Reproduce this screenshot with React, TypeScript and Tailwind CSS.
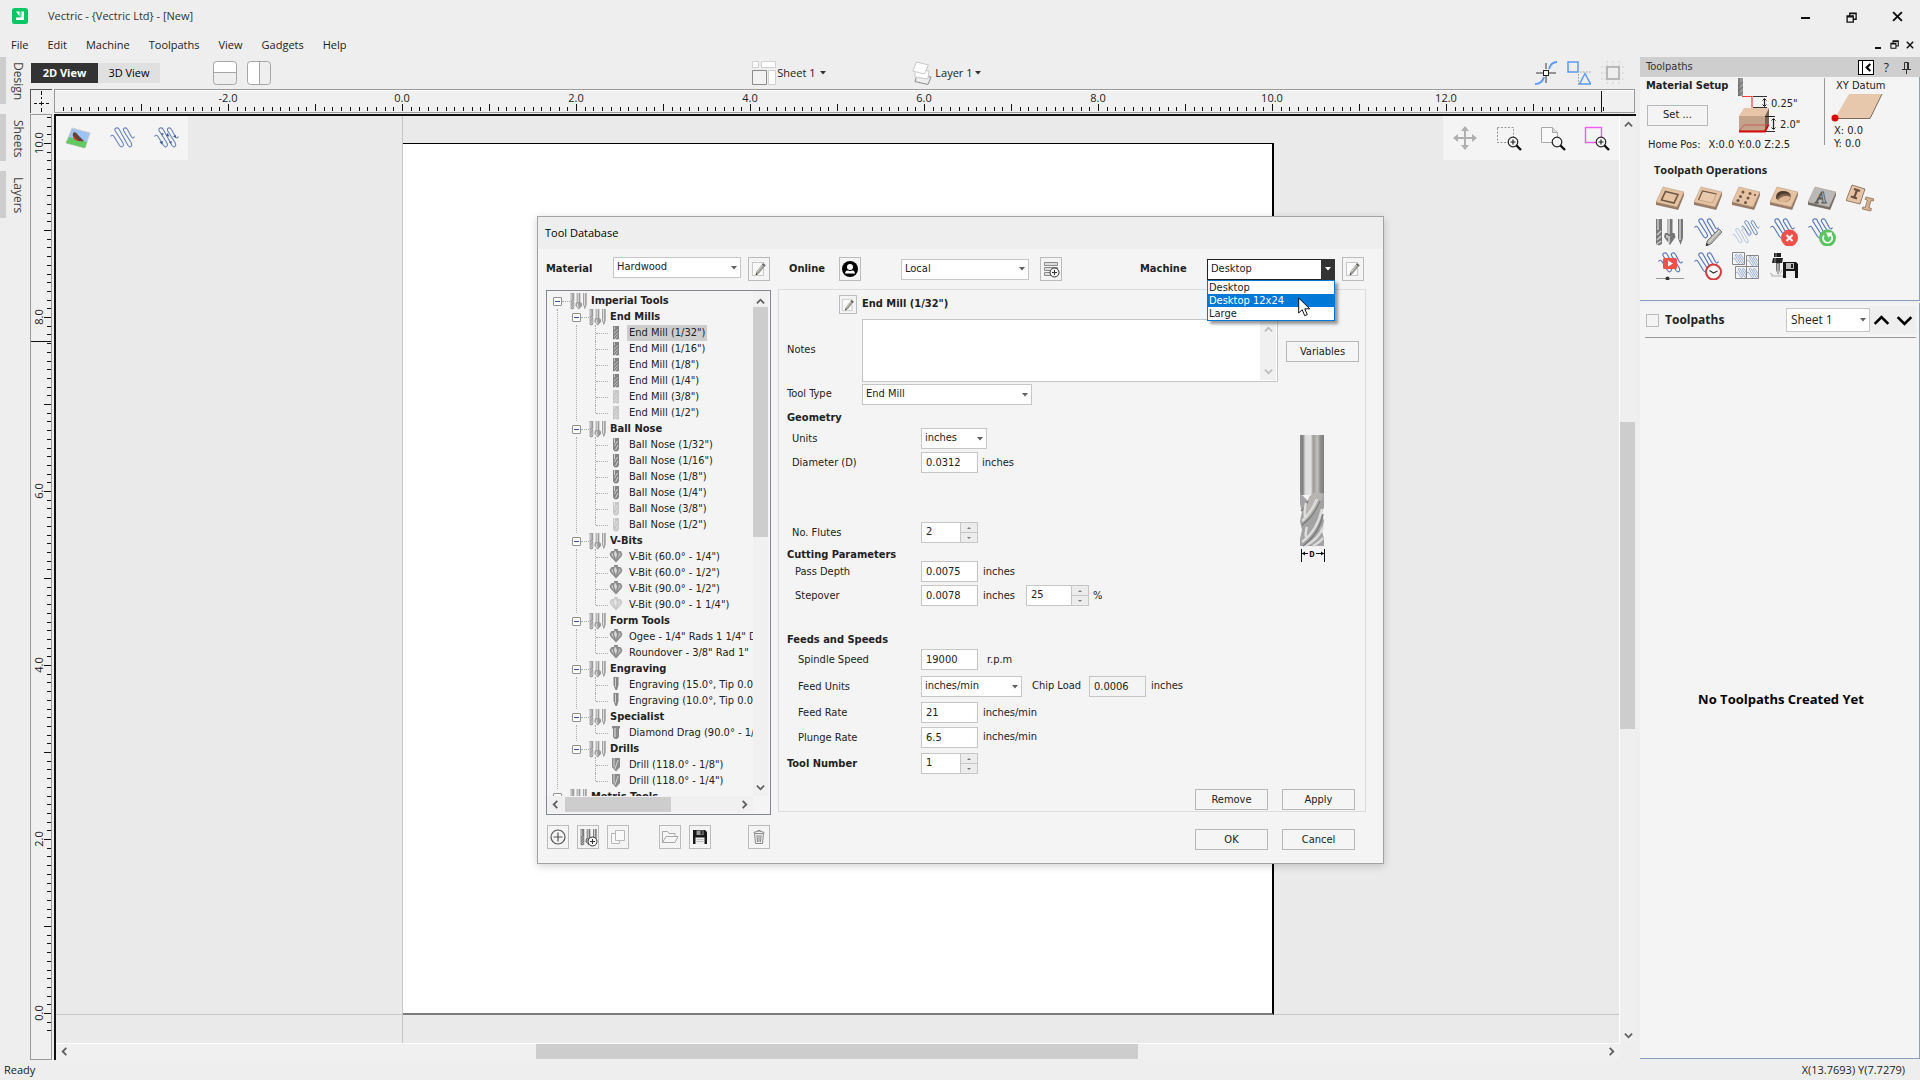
import React, { type ReactNode } from 'react';

const UI = "font-['Open_Sans','Noto_Sans',sans-serif]";
const DLG = "font-['DejaVu_Sans_Condensed','DejaVu_Sans',sans-serif]";

const SQUIGGLE =
  'M.5 9.5Q2 7 4 9.5L9.500 18.500Q11.500 21 13 19Q14 17.500 12.700 15.500L5 3.500Q4.500 1.500 6 1Q8 .5 9 2L18 18.500Q20 21 21.500 19Q22 17.500 21 15.500L13.500 3.500Q13 1.500 14.500 1Q16.500 .5 17.500 2.500L21.500 10Q23 12 24.500 9.500';

/* ---------- small drawings ---------- */

function Chevron({ dir, size = 9, color = '#606060', weight = 2 }: { dir: 'up' | 'down' | 'left' | 'right'; size?: number; color?: string; weight?: number }) {
  const d = { up: 'M1 7l4-4 4 4', down: 'M1 3l4 4 4-4', left: 'M7 1L3 5l4 4', right: 'M3 1l4 4-4 4' }[dir];
  return (
    <svg width={size} height={size} viewBox="0 0 10 10" fill="none" stroke={color} strokeWidth={weight}>
      <path d={d} />
    </svg>
  );
}

function Caret({ color = '#606060' }: { color?: string }) {
  return (
    <svg width="6" height="4" viewBox="0 0 6 4" fill={color}>
      <path d="M0 0h6L3 3.5z" />
    </svg>
  );
}

function RestoreIcon({ size }: { size: number }) {
  return (
    <svg width={size} height={size} viewBox="0 0 10 10" fill="none" stroke="#111" strokeWidth="1.2">
      <path d="M1 3.6h5.6v5.6H1zM1 4.4h5.6M3.4 3.4V1h5.8v5.6H7M3.4 1.5h5.8" />
    </svg>
  );
}

function CloseIcon({ size }: { size: number }) {
  return (
    <svg width={size} height={size} viewBox="0 0 10 10" fill="none" stroke="#111" strokeWidth="1.8">
      <path d="M1 1l8 8M9 1L1 9" />
    </svg>
  );
}

function EditIcon({ size = 16 }: { size?: number }) {
  return (
    <svg width={size} height={size} viewBox="0 0 16 16">
      <rect x="1.5" y="1.5" width="11" height="13" fill="#fafafa" stroke="#c8c8c8" />
      <path d="M12 2.2l2.6 2L8 12.6l-3.3 1.6.8-3.6z" fill="#96968e" />
      <path d="M12.2 3.6L6.4 11" stroke="#dcdcd0" strokeWidth=".9" />
      <path d="M4.7 14.2l.5-2 1.4 1.1z" fill="#222" />
      <path d="M12 2.2l2.6 2-1.1 1.4-2.6-2z" fill="#666" />
    </svg>
  );
}

function ToolsIcon({ size = 16, strong = false }: { size?: number; strong?: boolean }) {
  const a = strong ? '#777' : '#9a9a9a';
  const b = strong ? '#d0d0d0' : '#dedede';
  return (
    <svg width={size} height={size} viewBox="0 0 28 28">
      <path d="M1 0h6v25l-3 2-3-1z" fill={a} />
      <path d="M3 1v11M2 17l4-4M2 22l4-4M3 25l3-3" stroke={b} strokeWidth="1.500" />
      <path d="M11 0h6v15q4 2 3 6l-5.500 6L9 21q-1-3 2-6z" fill={a} />
      <path d="M13.500 0v15M13 17q-2 3 1 7" stroke={b} strokeWidth="2" fill="none" />
      <path d="M21.500 0h6v19l-3 8-3-8z" fill={a} />
      <path d="M24 0v21" stroke={b} strokeWidth="2" />
    </svg>
  );
}

type BitKind = 'end' | 'ball' | 'vbit' | 'engrave' | 'drag' | 'drill';

function BitIcon({ kind, faded }: { kind: BitKind; faded?: boolean }) {
  return (
    <svg width="14" height="16" viewBox="0 0 14 16" opacity={faded ? 0.4 : 1}>
      {kind === 'end' && (
        <g>
          <path d="M4 1h6v13l-2 .5L6 14l-2 .5z" fill="#828282" />
          <path d="M5.500 1.500v3M5 8.500l3.500-4M5 12l4-4.500M6 14l3-3.500" stroke="#c4c4c4" />
        </g>
      )}
      {kind === 'ball' && (
        <g>
          <path d="M4 1h6v10.500Q9.500 14.500 7 14.500T4 11.500z" fill="#848484" />
          <path d="M5.500 1v5M5.500 9l3-5M6.500 13l2.500-5" stroke="#d2d2d2" />
        </g>
      )}
      {kind === 'vbit' && (
        <g>
          <path d="M5 0h4v2h2.500L13.500 5 12.500 7.500 7 13.500 1.500 7.500.5 5 2.500 2H5z" fill="#8c8c8c" />
          <path d="M3 3.500L2.500 6 5 9zM6 1.500L5 5l2 5 1-5z" fill="#dadada" />
          <path d="M10 3l2 2.500L8.500 10z" fill="#b4b4b4" />
        </g>
      )}
      {kind === 'engrave' && (
        <g>
          <path d="M4.500 0h5v8L8 13H6.500L4.500 8z" fill="#858585" />
          <path d="M6.500 1v9" stroke="#cfcfcf" />
        </g>
      )}
      {kind === 'drag' && (
        <g>
          <path d="M3 1h8v2l-1 1v8l-2 2H6l-2-2V4L3 3z" fill="#8a8a8a" />
          <path d="M6 3v9" stroke="#d8d8d8" strokeWidth="1.200" />
        </g>
      )}
      {kind === 'drill' && (
        <g>
          <path d="M3 1h8v9l-4 4.500L3 10z" fill="#8a8a8a" />
          <path d="M5 1v9M6 12l3-9" stroke="#d4d4d4" />
        </g>
      )}
    </svg>
  );
}

/* ---------- form controls ---------- */

function Combo({ id, options, className, label }: { id: string; options: string[]; className: string; label?: string }) {
  return (
    <div className={`relative h-[21px] ${className}`}>
      <select id={id} aria-label={label} className="block h-full w-full appearance-none border border-[#c6c6c6] bg-white pl-[3px] text-[11px] text-[#222]">
        {options.map((o) => (
          <option key={o}>{o}</option>
        ))}
      </select>
      <span className="pointer-events-none absolute inset-y-0 right-[4px] flex items-center">
        <Caret />
      </span>
    </div>
  );
}

function Field({ id, value, readOnly, className = 'w-[57px]', label }: { id: string; value: string; readOnly?: boolean; className?: string; label?: string }) {
  return (
    <input
      id={id}
      aria-label={label}
      defaultValue={value}
      readOnly={readOnly}
      className={`h-[21px] shrink-0 border border-[#c6c6c6] pl-1 text-[11px] text-[#222] ${readOnly ? 'bg-[#f4f4f4]' : 'bg-white'} ${className}`}
    />
  );
}

function Spinner({ id, value, className = 'w-[57px]', label }: { id: string; value: string; className?: string; label?: string }) {
  return (
    <div className={`flex h-[21px] shrink-0 border border-[#c6c6c6] bg-white ${className}`}>
      <input id={id} aria-label={label} defaultValue={value} className="min-w-0 flex-1 bg-transparent pl-1 text-[11px] text-[#222]" />
      <div className="flex w-[17px] flex-col border-l border-[#c6c6c6] bg-[#ececec]">
        <button aria-label="Increase" className="flex flex-1 items-center justify-center border-b border-[#c6c6c6]">
          <svg width="4" height="2" viewBox="0 0 4 2" fill="#777"><path d="M0 2h4L2 0z" /></svg>
        </button>
        <button aria-label="Decrease" className="flex flex-1 items-center justify-center">
          <svg width="4" height="2" viewBox="0 0 4 2" fill="#777"><path d="M0 0h4L2 2z" /></svg>
        </button>
      </div>
    </div>
  );
}

function IconButton({ label, children }: { label: string; children: ReactNode }) {
  return (
    <button aria-label={label} className="flex h-6 w-[22px] shrink-0 items-center justify-center border border-[#bcbcbc] bg-[#f4f4f4]">
      {children}
    </button>
  );
}

function PushButton({ children }: { children: ReactNode }) {
  return <button className="h-[21px] w-[73px] border border-[#b8b8b8] bg-[#f5f5f5] pt-px text-[11px] text-[#222]">{children}</button>;
}

function Row({ label, htmlFor, pad, className = '', children }: { label: string; htmlFor: string; pad: string; className?: string; children: ReactNode }) {
  return (
    <div className={`flex h-[21px] items-center ${className}`}>
      <label htmlFor={htmlFor} className={`w-[134px] shrink-0 pt-[2px] ${pad}`}>{label}</label>
      {children}
    </div>
  );
}

function Unit({ className = 'pl-[5px]', children }: { className?: string; children: ReactNode }) {
  return <span className={`pt-[2px] ${className}`}>{children}</span>;
}

/* ---------- window chrome ---------- */

function TitleBar() {
  return (
    <header className="flex h-8 shrink-0 items-center pl-3">
      <svg width="16" height="16" viewBox="0 0 16 16">
        <rect width="16" height="16" rx="2.500" fill="#08c764" />
        <path d="M4 3.500h3.500v4.500h1V3.500H12V12H4V9h4" fill="#fff" />
        <path d="M9 3.500V9H4" fill="none" stroke="#08c764" strokeWidth=".9" />
      </svg>
      <h1 className="ml-5 flex-1 text-[11px] text-[#333]">Vectric - &#123;Vectric Ltd&#125; - [New]</h1>
      <button aria-label="Minimize" className="flex w-[46px] justify-center pt-1"><span className="h-[2px] w-[9px] bg-[#111]" /></button>
      <button aria-label="Restore" className="flex w-[46px] justify-center pt-[2px]"><RestoreIcon size={11} /></button>
      <button aria-label="Close" className="flex w-[46px] justify-center"><CloseIcon size={11} /></button>
    </header>
  );
}

function MenuBar() {
  return (
    <nav className="flex h-[25px] shrink-0 items-center pr-[2px] pl-[11px]">
      <div className="flex flex-1 gap-[19px] pt-px text-[11px] text-[#222]">
        {['File', 'Edit', 'Machine', 'Toolpaths', 'View', 'Gadgets', 'Help'].map((m) => (
          <button key={m}>{m}</button>
        ))}
      </div>
      <button aria-label="Minimize document" className="flex h-2 w-4 items-end justify-center"><span className="h-[2px] w-[6px] bg-[#111]" /></button>
      <button aria-label="Restore document" className="flex w-4 justify-center"><RestoreIcon size={9} /></button>
      <button aria-label="Close document" className="flex w-4 justify-center"><CloseIcon size={8} /></button>
    </nav>
  );
}

function SideTabs() {
  return (
    <div className="flex w-[30px] shrink-0 flex-col gap-[10px]">
      {['Design', 'Sheets', 'Layers'].map((t) => (
        <button key={t} className="flex h-[47px] items-center gap-1">
          <span className="h-full w-[6px] bg-[#cdcdcd]" />
          <span className="pt-[2px] text-[12px] leading-[16px] text-[#444] [writing-mode:vertical-rl]">{t}</span>
        </button>
      ))}
    </div>
  );
}

function ViewToolbar() {
  return (
    <div className="flex h-8 shrink-0 items-center pr-[15px] pl-px">
      <div className="flex basis-[45%] items-center text-[11px]">
        <button className="h-5 w-[67px] bg-[#333] font-bold text-white">2D View</button>
        <button className="h-5 w-[62px] bg-[#e0e0e0] text-black">3D View</button>
        <button aria-label="Split horizontally" className="ml-[53px]">
          <svg width="24" height="24" viewBox="0 0 24 24" fill="none" stroke="#a6a6a6">
            <path d="M1 11V4q0-3 3-3h16q3 0 3 3v7z" fill="#fff" stroke="none" />
            <rect x=".5" y=".5" width="23" height="23" rx="3" />
            <path d="M1 11.500h22" />
          </svg>
        </button>
        <button aria-label="Split vertically" className="ml-[10px]">
          <svg width="24" height="24" viewBox="0 0 24 24" fill="none" stroke="#a6a6a6">
            <path d="M12 1H4Q1 1 1 4v16q0 3 3 3h8z" fill="#fff" stroke="none" />
            <rect x=".5" y=".5" width="23" height="23" rx="3" />
            <path d="M12.500 1v22" />
          </svg>
        </button>
      </div>
      <div className="flex flex-1 items-center pl-1 text-[11px] text-[#222]">
        <button className="flex w-[160px] items-center gap-[1px]">
          <svg width="24" height="24" viewBox="0 0 24 24" fill="#fff" stroke="#d0d0d0">
            <path d="M.5.5h6v6h-6zM9.500.5h14v6h-14zM16.500 9.500h7v14h-7z" />
            <path d="M.5 9.500h14v14H.5z" fill="#f2f2f2" stroke="#8c8c8c" />
          </svg>
          <span className="mr-[3px]">Sheet 1</span>
          <Caret color="#333" />
        </button>
        <button className="flex items-center gap-[3px]">
          <svg width="20" height="24" viewBox="0 0 20 24" fill="#fff" stroke="#c8c8c8">
            <path d="M5 14l14 2-3 7.500-13-3z" fill="#eee" stroke="#8c8c8c" />
            <path d="M3 8l14 2-1 8-13-2z" />
            <path d="M4.500 1l12 3-4 9L.8 10z" />
          </svg>
          <span>Layer 1</span>
          <Caret color="#333" />
        </button>
      </div>
      <div className="flex gap-[10px]">
        <button aria-label="Smart snapping">
          <svg width="22" height="24" viewBox="0 0 22 24" fill="none">
            <path d="M0 23q7 0 9-7M14 8q2-7 8-7" stroke="#5b9bf5" strokeWidth="2" />
            <path d="M11 2v6M11 15v7M1 12h7M14 12h7" stroke="#777" strokeWidth="1.500" />
            <rect x="8.500" y="9.500" width="5" height="5" fill="#fff" stroke="#222" />
          </svg>
        </button>
        <button aria-label="Object snapping">
          <svg width="24" height="24" viewBox="0 0 24 24" fill="none" stroke="#5b9bf5" strokeWidth="1.500">
            <path d="M1 1h10v10H1zM18 12.500l5.500 10.500h-11z" />
            <path d="M13 11h11M11.500 13v11" stroke="#999" strokeWidth="1" strokeDasharray="1.500 1.500" />
          </svg>
        </button>
        <button aria-label="Grid snapping">
          <svg width="24" height="24" viewBox="0 0 24 24" fill="none" stroke="#cfcfcf">
            <path d="M6 0v24M12 0v24M18 0v24M0 6h24M0 12h24M0 18h24" strokeDasharray="2 1.500" />
            <rect x="6" y="6" width="12" height="12" fill="#eee" stroke="#a9a9a9" strokeWidth="1.500" />
          </svg>
        </button>
      </div>
    </div>
  );
}

/* ---------- rulers and drawing area ---------- */

const UNIT = 87;

function HorizontalRuler() {
  const zero = 348;
  const ticks = Array.from({ length: 178 }, (_, i) => i - 39);
  return (
    <div className="h-6 min-w-0 flex-1 border border-[#9a9a9a] bg-[#f0f0f0] shadow-[inset_0_1px_0_#fff]">
      <svg className={`block h-full w-full ${UI}`} fontSize="11" fill="#222" textAnchor="middle">
        {ticks.map((n) => {
          const x = Math.round(zero + (n * UNIT) / 10) - 0.5;
          return <line key={n} x1={x} x2={x} y1={n % 10 === 0 ? 14 : 17} y2={21} stroke="#111" />;
        })}
        {[-2, 0, 2, 4, 6, 8, 10, 12].map((v) => (
          <text key={v} x={zero + v * UNIT - 1} y="12">{v.toFixed(1)}</text>
        ))}
        <line x1="1546.500" x2="1546.500" y1="1" y2="22" stroke="#111" />
      </svg>
    </div>
  );
}

function VerticalRuler() {
  const ten = 29;
  const ticks = Array.from({ length: 106 }, (_, i) => i - 3);
  return (
    <div className="w-[22px] shrink-0 border border-[#9a9a9a] bg-[#f0f0f0]">
      <svg className={`block h-full w-full ${UI}`} fontSize="11" fill="#222" textAnchor="middle">
        {ticks.map((n) => {
          const y = Math.round(ten + (n * UNIT) / 10) - 0.5;
          return <line key={n} y1={y} y2={y} x1={n % 10 === 0 ? 13 : 16} x2={20} stroke="#111" />;
        })}
        {[10, 8, 6, 4, 2, 0].map((v) => {
          const y = ten + (10 - v) * UNIT - 1;
          return <text key={v} x="12" y={y} transform={`rotate(-90 12 ${y})`}>{v.toFixed(1)}</text>;
        })}
        <line y1="226.500" y2="226.500" x1="0" x2="20" stroke="#111" />
      </svg>
    </div>
  );
}

function Magnifier({ plus }: { plus: boolean }) {
  return (
    <g fill="none" stroke="#222">
      <path d="M20 20l5 5" stroke="#111" strokeWidth="2.400" />
      <circle cx="17" cy="17" r="4.800" fill="#f4f4f4" strokeWidth="1.200" />
      {plus && <path d="M14.500 17h5M17 14.500v5" strokeWidth="1.200" />}
    </g>
  );
}

function CanvasTool({ label, children }: { label: string; children: ReactNode }) {
  return <button aria-label={label} className="flex h-11 w-11 items-center justify-center">{children}</button>;
}

function DrawingArea() {
  return (
    <div className="relative min-w-0 flex-1 overflow-hidden border-r border-b border-r-white border-b-white bg-[#eaeaea]">
      <div className="absolute top-[898px] right-0 left-0 h-px bg-[#c6c6c6]" />
      <div className="absolute top-[27px] left-[347px] h-[872px] w-[871px] border-t border-r-2 border-b-2 border-t-black border-r-black border-b-[#7c7c7c] bg-white" />
      <div className="absolute inset-y-0 left-[346px] w-px bg-[#c6c6c6]" />
      <div className="absolute top-0 left-0 flex bg-[#f4f4f4]">
        <CanvasTool label="Toggle bitmap">
          <svg width="26" height="22" viewBox="0 0 26 22">
            <path d="M7 1l18 5-5 15L1 16z" fill="#9cc3f5" stroke="#ccc" />
            <path d="M4 10l18 5-2 6-19-5z" fill="#62c962" />
            <path d="M8 6q3-2 5 2l6 6q-5 1-8-1-4-2-3-7z" fill="#6a4234" />
            <path d="M8.500 9q1 4 4 4-3 1-4-4z" fill="#d04a30" stroke="#d04a30" />
          </svg>
        </CanvasTool>
        <CanvasTool label="Toggle toolpaths">
          <svg width="25" height="22" viewBox="0 0 25 22" fill="none" stroke="#6681bb" strokeWidth="1.100"><path d={SQUIGGLE} /></svg>
        </CanvasTool>
        <CanvasTool label="Toggle toolpath direction">
          <svg width="25" height="22" viewBox="0 0 25 22" fill="none" stroke="#6681bb" strokeWidth="1.100">
            <path d={SQUIGGLE} />
            <path d="M5.500 15l3.500-1-1 3.500zM13.500 6l2 3.500-3.500-.5zM19 9.500l3-1.500v3zM7 6.500l2.500-.5-.5 2.500zM15 15l3-1-1 3z" fill="#3c5a9a" stroke="none" />
          </svg>
        </CanvasTool>
      </div>
      <div className="absolute top-0 right-0 flex bg-[#f4f4f4]">
        <CanvasTool label="Pan">
          <svg width="24" height="24" viewBox="0 0 24 24" fill="#b0b0b0">
            <path d="M11 5H8l4-5 4 5h-3v6h6V8l5 4-5 4v-3h-6v6h3l-4 5-4-5h3v-6H5v3l-5-4 5-4v3h6z" />
          </svg>
        </CanvasTool>
        <CanvasTool label="Zoom to selection">
          <svg width="26" height="26" viewBox="0 0 26 26" fill="none">
            <rect x="1.500" y="2.500" width="16" height="15" stroke="#999" strokeDasharray="2 1.500" />
            <Magnifier plus />
          </svg>
        </CanvasTool>
        <CanvasTool label="Zoom to sheet">
          <svg width="26" height="26" viewBox="0 0 26 26" fill="none">
            <path d="M1.500 2.500h11l5 5v10h-16z" fill="#fafafa" stroke="#aaa" />
            <path d="M12.500 2.500v5h5" fill="#ddd" stroke="#aaa" />
            <Magnifier plus={false} />
          </svg>
        </CanvasTool>
        <CanvasTool label="Zoom to drawing">
          <svg width="26" height="26" viewBox="0 0 26 26" fill="none">
            <rect x="1.500" y="2.500" width="16" height="15" stroke="#f55af5" strokeWidth="1.400" />
            <Magnifier plus />
          </svg>
        </CanvasTool>
      </div>
    </div>
  );
}

function Workspace() {
  return (
    <main className="flex min-w-0 flex-1 flex-col">
      <ViewToolbar />
      <div className="flex gap-[2px] pr-[5px]">
        <div className="h-6 w-[22px] shrink-0 border-t border-l border-[#555] bg-[#f0f0f0]">
          <svg width="21" height="23" viewBox="0 0 21 23" stroke="#111" fill="none">
            <path d="M10.500 1v4M10.500 7v2M10.500 11.500v4M10.500 18v4M3 13.500h3M8 13.500h5M15 13.500h3" />
          </svg>
        </div>
        <HorizontalRuler />
      </div>
      <div className="mt-px flex min-h-0 flex-1 gap-[2px] pr-1">
        <VerticalRuler />
        <div className="flex min-w-0 flex-1 flex-col border-t-2 border-l-2 border-[#111]">
          <div className="flex min-h-0 flex-1">
            <DrawingArea />
            <div className="flex w-4 flex-col items-center bg-[#efefef] py-1">
              <button aria-label="Scroll up"><Chevron dir="up" /></button>
              <div className="flex w-full flex-1 flex-col pr-px">
                <div className="flex-[290]" />
                <div className="flex-[305] bg-[#cdcdcd]" />
                <div className="flex-[299]" />
              </div>
              <button aria-label="Scroll down"><Chevron dir="down" /></button>
            </div>
          </div>
          <div className="mr-4 flex h-4 items-center bg-[#f0f0f0] pr-1 pb-px pl-1">
            <button aria-label="Scroll left"><Chevron dir="left" /></button>
            <div className="flex h-[15px] flex-1">
              <div className="flex-[467]" />
              <div className="flex-[602] bg-[#cdcdcd]" />
              <div className="flex-[469]" />
            </div>
            <button aria-label="Scroll right"><Chevron dir="right" /></button>
          </div>
        </div>
      </div>
    </main>
  );
}

/* ---------- toolpath operation icons ---------- */

function Plate({ fill = '#e6c3a2', side = '#a07f66', children }: { fill?: string; side?: string; children?: ReactNode }) {
  return (
    <g>
      <path d="M0 18l21 5 7-15v2.500l-6 15L0 20.500z" fill={side} stroke="#6b5646" strokeWidth=".5" />
      <path d="M7 3l21 5-7 15L0 18z" fill={fill} stroke="#b39378" strokeWidth=".5" />
      {children}
    </g>
  );
}

function Curves({ opacity = 1 }: { opacity?: number }) {
  return <path d={SQUIGGLE} fill="none" stroke="#5878bd" strokeWidth="1.200" opacity={opacity} />;
}

const operations: { label: string; art: ReactNode }[] = [
  { label: 'Profile Toolpath', art: <Plate><path d="M9.500 7.500l12.500 3-4 8.500-12.500-3z" fill="none" stroke="#6d5747" strokeWidth="1.600" /></Plate> },
  { label: 'Pocket Toolpath', art: <Plate><path d="M8.500 7l14 3-4 9-14-3z" fill="#e8c9ab" stroke="#c7a588" /><path d="M4.500 16l4-9 14 3" fill="none" stroke="#6f5847" strokeWidth="1.200" /></Plate> },
  { label: 'Drilling Toolpath', art: <Plate><g fill="#6b5646"><circle cx="11" cy="8" r="1.500" /><circle cx="18" cy="9.500" r="1.500" /><circle cx="8.500" cy="12.500" r="1.500" /><circle cx="16" cy="14" r="1.500" /><circle cx="6" cy="16.500" r="1.500" /><circle cx="13.500" cy="18.500" r="1.500" /><circle cx="23" cy="11" r="1.100" /></g></Plate> },
  { label: 'Moulding Toolpath', art: <Plate><ellipse cx="13.500" cy="12.500" rx="7.500" ry="5.500" fill="#7d604b" /><path d="M6.500 15q4-8 14-4-2-4-8-4t-6.500 8z" fill="#4f3c30" /><path d="M8 16q5-6 13-3-2 5-8 5-4 0-5-2z" fill="#dcb591" /></Plate> },
  { label: 'V-Carve Toolpath', art: <Plate fill="#b9b9b9" side="#6f6f6f"><text x="13.500" y="19" textAnchor="middle" fontSize="17" fontWeight="700" fontStyle="italic" fontFamily="Liberation Serif, serif" fill="#b4b4b4" stroke="#5a5a5a" strokeWidth=".9">A</text></Plate> },
  { label: 'Inlay Toolpath', art: <g><path d="M6 1l13 4-5 15L0 16.500z" fill="#e6c3a2" stroke="#7d6452" strokeWidth=".8" /><path d="M8 5l6 2M11 6l-2.500 7M5 12.500l6 2" stroke="#66503f" strokeWidth="2.200" /><path d="M20 13l8 2-.6 2-2.400-.4-2 7 2.500 1-.8 2.400-8.500-2 .7-2 2.400.4 2-7.200-2.300-1z" fill="#d7b08c" stroke="#7d6452" strokeWidth=".7" /></g> },
  { label: 'Tool Database', art: <g><path d="M0 1h6v25l-3 1.500L0 26z" fill="#777" /><path d="M2 1v11M1 17l4-4M1 22l4-4M1 26l4-3" stroke="#d0d0d0" strokeWidth="1.400" /><path d="M11.500 1h5v14h2l1 4-5.500 8L8 19l1-4h2.500z" fill="#777" /><path d="M13 1v15M13 18v7M11 17v3" stroke="#e0e0e0" strokeWidth="1.400" /><path d="M22 1h5v19l-2.500 7L22 20z" fill="#777" /><path d="M24 1v21" stroke="#d8d8d8" strokeWidth="1.400" /></g> },
  { label: 'Edit Toolpath', art: <g><Curves /><path d="M25 11l3 3-11 12-5 2 1-5z" fill="#b5b5ad" stroke="#55554f" strokeWidth=".7" /><path d="M25.500 12.500L15 24" stroke="#e8e8e0" /><path d="M12 28l.8-3 2 2z" fill="#222" /></g> },
  { label: 'Duplicate Toolpath', art: <g><g transform="translate(0 10) scale(.75)"><Curves opacity={0.45} /></g><g transform="translate(9 2) scale(.75)"><Curves /></g></g> },
  { label: 'Delete Toolpath', art: <g><Curves /><circle cx="19.500" cy="20" r="8.500" fill="#f0504c" /><path d="M16.500 17l6 6M22.500 17l-6 6" stroke="#fff" strokeWidth="2" /></g> },
  { label: 'Recalculate Toolpaths', art: <g><Curves /><circle cx="19.500" cy="20" r="8.500" fill="#5ac45e" /><path d="M16 17.500a4.500 4.500 0 1 0 6.500-.8" fill="none" stroke="#fff" strokeWidth="1.900" /><path d="M18 14.500h6v1.200l-3.500 4z" fill="#fff" /></g> },
  { label: '', art: null },
  { label: 'Preview Toolpaths', art: <g><g transform="translate(2 0)"><Curves /></g><rect x="7" y="6" width="14" height="11" rx="1.500" fill="#f0504c" /><path d="M12 8.500v6l5-3z" fill="#fff" /><path d="M0 26.500h28" stroke="#999" /><circle cx="11.500" cy="26.500" r="2" fill="#333" /></g> },
  { label: 'Toolpath Summary', art: <g><Curves /><circle cx="19.500" cy="20" r="7.500" fill="#fafafa" stroke="#d63c3c" strokeWidth="2" /><path d="M15.500 18.500l4 2.500 4-2" fill="none" stroke="#333" strokeWidth="1.200" /></g> },
  { label: 'Toolpath Tiling', art: <g fill="none"><g transform="translate(1 2) scale(.48)"><Curves /></g><g transform="translate(15 4) scale(.48)"><Curves /></g><g transform="translate(4 16) scale(.48)"><Curves /></g><g transform="translate(15 16) scale(.48)"><Curves /></g><path d="M.5.5h12v12H.5zM14.500 3.500h12v11h-12zM3.500 14.500h11v12h-11zM14.500 14.500h12v12h-12z" stroke="#888" /></g> },
  { label: 'Save Toolpath', art: <g><path d="M4 1h7v4H4zM3 6h10l-1 5H2z" fill="#222" /><path d="M6 1v4M5 6v5" stroke="#888" /><path d="M6 11h4v7l-2 5-2-5z" fill="#777" /><path d="M8 12v9" stroke="#ddd" /><path d="M0 21l3 2M1 24h12M12 18l-2 4" stroke="#aaa" /><path d="M13 10h13l2 2v14H13z" fill="#161616" /><path d="M16 11h8v6h-8z" fill="#bbb" /><path d="M21 12h2v4h-2z" fill="#222" /><path d="M16 19h9v7h-9z" fill="#eee" /></g> },
];

function SetupDiagram() {
  return (
    <svg width="40" height="56" viewBox="0 0 40 56" fill="none">
      <path d="M1 0h5v18H1z" fill="#999" />
      <path d="M2 0v18M1 8l5-4M1 13l5-4M1 18l5-4" stroke="#5f5f5f" strokeWidth=".9" />
      <path d="M5 18.500h10v11" stroke="#f23b3b" strokeWidth="1.200" />
      <path d="M16 18.500h14M16 29.500h14M27 38.500h11M27 53.500h11" stroke="#333" />
      <path d="M27.500 21v7M36.500 41v10" stroke="#222" strokeWidth="1.200" />
      <path d="M25.500 22.500l2-2 2 2M25.500 26.500l2 2 2-2M34.500 42.500l2-2 2 2M34.500 49.500l2 2 2-2" stroke="#222" />
      <path d="M2 38l5-8h25l-4 8z" fill="#e8c5a8" />
      <path d="M2 38h26v15H2z" fill="#c3a48b" />
      <path d="M28 38l4-8v16l-4 7z" fill="#7b6452" />
      <path d="M2 53l5-6h24l-4 6z" stroke="#c95a50" />
      <path d="M2 53.500h26l3.500-7" stroke="#d40c0c" strokeWidth="2" />
      <path d="M28 38.500h9" stroke="#222" />
    </svg>
  );
}

function ToolpathsPanel() {
  return (
    <aside className="flex w-[280px] shrink-0 flex-col pb-px">
      <header className="flex h-5 items-center bg-[#cecece] pt-px pr-[9px] pl-[6px]">
        <h2 className={`flex-1 text-[11px] text-[#333] ${DLG}`}>Toolpaths</h2>
        <button aria-label="Switch tab" className="flex h-[15px] w-4 items-center border border-black bg-white pl-[3px]">
          <span className="h-full w-px bg-black" />
          <span className="pl-px"><Chevron dir="left" color="#000" weight={2.4} /></span>
        </button>
        <button aria-label="Help" className="ml-[10px] text-[12px] text-[#222]">?</button>
        <button aria-label="Pin" className="ml-[13px]">
          <svg width="9" height="12" viewBox="0 0 9 12" fill="none" stroke="#333"><path d="M2.500 7V.5h4V7M0 7.500h9M4.500 8v4M5.500 1v6" /></svg>
        </button>
      </header>
      <section className={`h-[224px] border-r border-b border-[#8aa0bd] bg-[#f4f4f4] ${DLG} text-[11px] text-[#222]`}>
        <div className="flex h-[56px] pt-px pl-[6px]">
          <div className="w-[91px]">
            <h3 className="text-[11px] leading-[15px] font-bold whitespace-nowrap">Material Setup</h3>
            <button className="mt-3 ml-px block h-[21px] w-[61px] border border-[#b8b8b8]">Set ...</button>
          </div>
          <SetupDiagram />
          <div className="-ml-[6px] w-[53px] pt-[15px] leading-[21px]">
            <p>0.25"</p>
            <p className="pl-[9px]">2.0"</p>
          </div>
          <div className="h-[67px] w-px bg-[#999]" />
          <div className="pl-[6px]">
            <p className="pl-[5px] leading-[15px]">XY Datum</p>
            <svg width="52" height="30" viewBox="0 0 52 30">
              <path d="M4 25L18 1h33L39 25z" fill="#e8c8ac" />
              <path d="M4 25.500h35L51 1" fill="none" stroke="#7a685a" />
              <circle cx="4" cy="25" r="3.500" fill="#d40c0c" />
            </svg>
            <p className="pt-px pl-[3px] leading-[13px]">X: 0.0<br />Y: 0.0</p>
          </div>
        </div>
        <p className="pt-1 pl-2 leading-[15px]">Home Pos:<span className="pl-2">X:0.0 Y:0.0 Z:2.5</span></p>
        <h3 className={`mt-[9px] pl-[14px] text-[11px] leading-[18px] font-bold ${UI}`}>Toolpath Operations</h3>
        <div className="mt-[5px] grid w-[234px] grid-cols-6 gap-x-[10px] gap-y-[6px] pl-4">
          {operations.map((o) =>
            o.art ? (
              <button key={o.label} aria-label={o.label} className="h-7 w-7">
                <svg width="28" height="28" viewBox="0 0 28 28">{o.art}</svg>
              </button>
            ) : (
              <span key="gap" />
            ),
          )}
        </div>
      </section>
      <section className="mt-[2px] flex flex-1 flex-col border-r border-b border-[#8aa0bd] bg-[#f4f4f4]">
        <div className="mr-[3px] ml-[5px] flex h-[35px] items-center border-b border-[#999]">
          <input id="all-toolpaths" type="checkbox" className="ml-px h-[13px] w-[13px] appearance-none border border-[#bcbcbc]" />
          <label htmlFor="all-toolpaths" className="ml-[6px] flex-1 text-[12px] font-bold text-[#222]">Toolpaths</label>
          <div className="relative h-6 w-[84px]">
            <select aria-label="Sheet" className="block h-full w-full appearance-none border border-[#c6c6c6] bg-white pl-1 text-[12px] text-[#222]"><option>Sheet 1</option></select>
            <span className="pointer-events-none absolute inset-y-0 right-[4px] flex items-center"><Caret /></span>
          </div>
          <button aria-label="Move up" className="flex h-7 w-[23px] items-center justify-center bg-[#eee]"><Chevron dir="up" size={17} color="#000" weight={1.6} /></button>
          <button aria-label="Move down" className="flex h-7 w-[23px] items-center justify-center bg-[#eee]"><Chevron dir="down" size={17} color="#000" weight={1.6} /></button>
        </div>
        <p className="flex flex-1 items-center justify-center pt-1 pl-[3px] text-[13px] font-bold text-black">No Toolpaths Created Yet</p>
      </section>
    </aside>
  );
}

/* ---------- tool database dialog ---------- */

type Leaf = { name: string; faded?: boolean };
type Group = { name: string; kind: BitKind; items: Leaf[] };

const groups: Group[] = [
  { name: 'End Mills', kind: 'end', items: [{ name: 'End Mill (1/32")' }, { name: 'End Mill (1/16")' }, { name: 'End Mill (1/8")' }, { name: 'End Mill (1/4")' }, { name: 'End Mill (3/8")', faded: true }, { name: 'End Mill (1/2")', faded: true }] },
  { name: 'Ball Nose', kind: 'ball', items: [{ name: 'Ball Nose (1/32")' }, { name: 'Ball Nose (1/16")' }, { name: 'Ball Nose (1/8")' }, { name: 'Ball Nose (1/4")' }, { name: 'Ball Nose (3/8")', faded: true }, { name: 'Ball Nose (1/2")', faded: true }] },
  { name: 'V-Bits', kind: 'vbit', items: [{ name: 'V-Bit (60.0° - 1/4")' }, { name: 'V-Bit (60.0° - 1/2")' }, { name: 'V-Bit (90.0° - 1/2")' }, { name: 'V-Bit (90.0° - 1 1/4")', faded: true }] },
  { name: 'Form Tools', kind: 'vbit', items: [{ name: 'Ogee - 1/4" Rads 1 1/4" D' }, { name: 'Roundover - 3/8" Rad 1"' }] },
  { name: 'Engraving', kind: 'engrave', items: [{ name: 'Engraving (15.0°, Tip 0.0' }, { name: 'Engraving (10.0°, Tip 0.0' }] },
  { name: 'Specialist', kind: 'drag', items: [{ name: 'Diamond Drag (90.0° - 1/' }] },
  { name: 'Drills', kind: 'drill', items: [{ name: 'Drill (118.0° - 1/8")' }, { name: 'Drill (118.0° - 1/4")' }] },
];

function Expander() {
  return (
    <button aria-label="Collapse" className="flex h-[9px] w-[9px] shrink-0 items-center justify-center rounded-[1px] border border-[#919191] bg-white">
      <span className="h-px w-[5px] bg-[#3a5aa8]" />
    </button>
  );
}

function Branch({ name, children }: { name: string; children?: ReactNode }) {
  return (
    <li>
      <div className="flex h-4 items-center">
        <Expander />
        <span className="w-2 border-t border-dotted border-[#aaa]" />
        <ToolsIcon size={17} />
        <span className="pl-1 font-bold">{name}</span>
      </div>
      {children}
    </li>
  );
}

function ToolTree() {
  return (
    <div className="flex h-[525px] flex-col border border-[#828790] bg-[#f4f4f4]">
      <div className="flex min-h-0 flex-1">
        <ul className="min-w-0 flex-1 overflow-hidden pt-[2px] pl-[6px] text-[11px] whitespace-nowrap text-[#222]">
          <Branch name="Imperial Tools">
            <ul className="ml-[4px] border-l border-dotted border-[#aaa] pl-[14px]">
              {groups.map((g, gi) => (
                <Branch key={g.name} name={g.name}>
                  <ul className={gi < groups.length - 1 ? 'ml-[4px] border-l border-dotted border-[#aaa] pl-[18px]' : 'ml-[4px] pl-[19px]'}>
                    {g.items.map((it, i) => (
                      <li key={it.name} className="flex h-4 items-center">
                        <span className={`w-px shrink-0 self-start border-l border-dotted border-[#aaa] ${i === g.items.length - 1 ? 'h-2' : 'h-4'}`} />
                        <span className="w-3 shrink-0 border-t border-dotted border-[#aaa]" />
                        <span className="shrink-0 pl-px"><BitIcon kind={g.kind} faded={it.faded} /></span>
                        <span className={`ml-[4px] h-4 px-[2px] leading-4 ${gi === 0 && i === 0 ? 'bg-[#cdcdcd]' : ''}`}>{it.name}</span>
                      </li>
                    ))}
                  </ul>
                </Branch>
              ))}
            </ul>
          </Branch>
          <Branch name="Metric Tools" />
        </ul>
        <div className="mr-[2px] flex w-[15px] flex-col items-center bg-[#f0f0f0] py-[4px]">
          <button aria-label="Scroll tree up" className="h-3"><Chevron dir="up" /></button>
          <div className="h-[230px] w-full bg-[#cdcdcd]" />
          <div className="flex-1" />
          <button aria-label="Scroll tree down"><Chevron dir="down" /></button>
        </div>
      </div>
      <div className="mr-[17px] mb-[2px] flex h-4 items-center bg-[#f0f0f0] pl-1">
        <button aria-label="Scroll tree left"><Chevron dir="left" /></button>
        <div className="ml-[5px] h-[15px] w-[106px] bg-[#cdcdcd]" />
        <div className="flex-1" />
        <button aria-label="Scroll tree right" className="mr-1"><Chevron dir="right" /></button>
      </div>
    </div>
  );
}

function EndMillPreview() {
  return (
    <svg width="26" height="127" viewBox="0 0 26 127" fill="none">
      <defs>
        <linearGradient id="shank" x1="0" x2="1" y1="0" y2="0">
          <stop offset="0" stopColor="#8a8a8a" />
          <stop offset=".12" stopColor="#808080" />
          <stop offset=".22" stopColor="#dcdcdc" />
          <stop offset=".45" stopColor="#e2e2e2" />
          <stop offset=".55" stopColor="#9a9a9a" />
          <stop offset=".72" stopColor="#c2c0bc" />
          <stop offset=".85" stopColor="#8f8f8f" />
          <stop offset="1" stopColor="#7c7c7c" />
        </linearGradient>
      </defs>
      <path d="M1 0h24v60H1z" fill="url(#shank)" />
      <path d="M1 58l8 8 8-8h8v14l-2 6 2 8-2 10 2 8v7H1v-7l2-9-2-9 2-9-2-8z" fill="#a3a3a3" />
      <path d="M10 62q8-9 14-2-4 16-20 27 2-14 6-25z" fill="#b6b5b2" />
      <path d="M3 86Q12 78 18 64M3 107Q18 96 23 74M6 111Q20 104 24 92M14 111q7-4 10-8" stroke="#dcdcdc" strokeWidth="2.400" />
      <path d="M3 90Q14 82 21 66M4 111Q20 99 24 79M2 76Q7 72 9 66" stroke="#7c7c7c" strokeWidth="1.400" />
      <path d="M7 68q-2 8-1 14M8 92q-2 6-1 10" stroke="#dedede" strokeWidth="2.400" />
      <path d="M2.500 114v13M25.500 114v13M3 118.500h6M17 118.500h8" stroke="#111" />
      <path d="M3 118.500l3-2v4zM25 118.500l-3-2v4z" fill="#111" />
      <text x="13" y="122" textAnchor="middle" fontSize="9" fill="#111" fontFamily="Liberation Mono, monospace" fontWeight="700">D</text>
    </svg>
  );
}

function MachineMenu() {
  return (
    <div className="absolute top-[21px] right-0 left-0 z-10">
      <ul role="listbox" aria-label="Machine" className="border border-[#0078d7] bg-white text-[11px] leading-[13px] text-[#222] shadow-[3px_3px_3px_rgba(0,0,0,0.4)]">
        <li role="option" aria-selected="false" className="pl-px">Desktop</li>
        <li role="option" aria-selected="true" className="bg-[#0078d7] pl-px text-white">Desktop 12x24</li>
        <li role="option" aria-selected="false" className="pl-px">Large</li>
      </ul>
      <svg width="13" height="20" viewBox="0 0 13 20" className="absolute top-[17px] left-[91px]">
        <path d="M.7 1v15l3.500-3.300 2.500 6 2.600-1.100L6.800 11.800h4.900z" fill="#fff" stroke="#111" />
      </svg>
    </div>
  );
}

function ToolDetails() {
  return (
    <section className="relative h-[523px] border border-[#dcdcdc] pt-[5px] pl-2 text-[11px] text-[#222]">
      <div className="flex items-center pl-[52px]">
        <button aria-label="Rename tool" className="flex h-[19px] w-[18px] items-center justify-center border border-[#bcbcbc]"><EditIcon size={14} /></button>
        <h3 className="pl-[5px] text-[11px] font-bold">End Mill (1/32")</h3>
      </div>
      <div className="mt-[5px] flex h-[63px] items-center">
        <label htmlFor="notes" className="w-[75px]">Notes</label>
        <div className="flex h-full w-[416px] border border-[#c6c6c6] bg-white p-px">
          <textarea id="notes" className="min-w-0 flex-1 resize-none" />
          <div className="flex w-4 flex-col items-center justify-between bg-[#f0f0f0] py-1">
            <Chevron dir="up" color="#bcbcbc" />
            <Chevron dir="down" color="#bcbcbc" />
          </div>
        </div>
        <div className="ml-2 pt-[2px]"><PushButton>Variables</PushButton></div>
      </div>
      <div className="mt-[2px] flex items-center">
        <label htmlFor="tool-type" className="w-[75px]">Tool Type</label>
        <Combo id="tool-type" options={['End Mill']} className="w-[170px]" />
      </div>
      <div className="flex">
        <div className="flex-1">
          <h4 className="h-[23px] pt-px leading-[23px] font-bold">Geometry</h4>
          <Row label="Units" htmlFor="units" pad="pl-[5px]"><Combo id="units" options={['inches']} className="w-[66px]" /></Row>
          <Row label="Diameter (D)" htmlFor="diameter" pad="pl-[5px]" className="mt-[3px]"><Field id="diameter" value="0.0312" /><Unit className="pl-1">inches</Unit></Row>
          <Row label="No. Flutes" htmlFor="flutes" pad="pl-[5px]" className="mt-[49px]"><Spinner id="flutes" value="2" /></Row>
          <h4 className="h-[18px] pt-[3px] leading-[18px] font-bold">Cutting Parameters</h4>
          <Row label="Pass Depth" htmlFor="pass-depth" pad="pl-2"><Field id="pass-depth" value="0.0075" /><Unit>inches</Unit></Row>
          <Row label="Stepover" htmlFor="stepover" pad="pl-2" className="mt-[3px]">
            <Field id="stepover" value="0.0078" />
            <Unit className="w-[48px] pl-[5px]">inches</Unit>
            <Spinner id="stepover-percent" label="Stepover percent" value="25" className="w-[63px]" />
            <Unit className="pl-1">%</Unit>
          </Row>
          <h4 className="mt-6 h-[19px] leading-[19px] font-bold">Feeds and Speeds</h4>
          <Row label="Spindle Speed" htmlFor="spindle" pad="pl-[11px]"><Field id="spindle" value="19000" /><Unit className="pl-[9px]">r.p.m</Unit></Row>
          <Row label="Feed Units" htmlFor="feed-units" pad="pl-[11px]" className="mt-[6px]">
            <Combo id="feed-units" options={['inches/min']} className="w-[101px]" />
            <label htmlFor="chip-load" className="w-[67px] pl-[10px]">Chip Load</label>
            <Field id="chip-load" value="0.0006" readOnly />
            <span className="pl-[5px]">inches</span>
          </Row>
          <Row label="Feed Rate" htmlFor="feed-rate" pad="pl-[11px]" className="mt-[5px]"><Field id="feed-rate" value="21" /><Unit>inches/min</Unit></Row>
          <Row label="Plunge Rate" htmlFor="plunge-rate" pad="pl-[11px]" className="mt-1"><Field id="plunge-rate" value="6.5" /><span className="pl-[5px]">inches/min</span></Row>
          <Row label="Tool Number" htmlFor="tool-number" pad="font-bold" className="mt-[5px]"><Spinner id="tool-number" value="1" /></Row>
        </div>
        <div className="w-[66px] pt-[30px]"><EndMillPreview /></div>
      </div>
      <div className="mt-[15px] flex justify-end gap-[14px] pr-[10px]">
        <PushButton>Remove</PushButton>
        <PushButton>Apply</PushButton>
      </div>
    </section>
  );
}

function ToolDatabase() {
  return (
    <div role="dialog" aria-label="Tool Database" className={`absolute top-[216px] left-[537px] w-[847px] border border-[#a3a3a3] bg-[#f4f4f4] pb-[13px] text-[11px] text-[#222] shadow-[0_2px_8px_rgba(0,0,0,0.18)] ${DLG}`}>
      <h2 className={`flex h-8 items-center bg-[#eee] pl-[7px] text-[11px] text-black ${UI}`}>Tool Database</h2>
      <div className="flex gap-[7px] pr-[17px] pl-2">
        <div className="w-[225px]">
          <div className="flex h-[41px] items-start pt-2">
            <label htmlFor="material" className="w-[67px] leading-6 font-bold">Material</label>
            <Combo id="material" options={['Hardwood']} className="w-[128px]" />
            <span className="ml-[7px]"><IconButton label="Edit material"><EditIcon /></IconButton></span>
          </div>
          <ToolTree />
          <div className="mt-[10px] flex gap-2 px-px">
            <IconButton label="New tool">
              <svg width="16" height="16" viewBox="0 0 16 16" fill="none" stroke="#555" strokeWidth="1.200"><circle cx="8" cy="8" r="7" /><path d="M3.500 8h9M8 3.500v9" /></svg>
            </IconButton>
            <IconButton label="New group">
              <span className="relative"><ToolsIcon size={17} strong />
                <svg width="11" height="11" viewBox="0 0 11 11" className="absolute -right-px -bottom-px" fill="#f4f4f4" stroke="#333"><circle cx="5.500" cy="5.500" r="4.500" /><path d="M3 5.500h5M5.500 3v5" /></svg>
              </span>
            </IconButton>
            <IconButton label="Copy">
              <svg width="16" height="16" viewBox="0 0 16 16" fill="#fafafa" stroke="#b8b8b8"><path d="M1.500 4.500h8v10h-8z" /><path d="M5.500 1.500h9v10h-9z" /></svg>
            </IconButton>
            <span className="w-[14px]" />
            <IconButton label="Open">
              <svg width="17" height="14" viewBox="0 0 17 14" fill="#f6f6f6" stroke="#a8a8a8"><path d="M.5 12.500v-11h5l1.500 2h6v3" /><path d="M.5 12.500l3.500-6h12l-3 6z" /></svg>
            </IconButton>
            <IconButton label="Save">
              <svg width="16" height="16" viewBox="0 0 16 16"><path d="M1 1h12l2 2v12H1z" fill="#1a1a1a" /><path d="M4.500 1.500h7V6h-7z" fill="#999" /><path d="M8.500 2h2v3.500h-2z" fill="#222" /><path d="M3.500 8.500h9V15h-9z" fill="#eee" /><path d="M4.500 10.500h7M4.500 12.500h7" stroke="#aaa" strokeWidth=".7" /></svg>
            </IconButton>
            <span className="flex-1" />
            <IconButton label="Delete">
              <svg width="12" height="16" viewBox="0 0 12 16" fill="none" stroke="#888"><path d="M1.500 4.500l1 10h7l1-10z" fill="#eee" /><path d="M.5 3.500Q6 .5 11.500 3.500M4.500 1.500h3M4 6l.5 7M6 6v7M8 6l-.5 7" /></svg>
            </IconButton>
          </div>
        </div>
        <div className="min-w-0 flex-1">
          <div className="flex h-10 items-center">
            <span className="w-[61px] pl-[11px] font-bold">Online</span>
            <IconButton label="Account">
              <svg width="16" height="16" viewBox="0 0 16 16"><circle cx="8" cy="8" r="8" fill="#000" /><circle cx="8" cy="6" r="3" fill="#fff" /><path d="M3 12.500Q3.500 9 6 9.500q2 1 4 0 2.500-.5 3 3z" fill="#fff" /></svg>
            </IconButton>
            <div className="w-10" />
            <Combo id="source" label="Tool source" options={['Local']} className="w-[128px]" />
            <div className="w-[11px]" />
            <IconButton label="Add location">
              <svg width="17" height="17" viewBox="0 0 17 17" fill="#ddd" stroke="#8a8a8a"><path d="M1.500 1.500h13v3h-13zM1.500 6.500h13v3h-13zM1.500 11.500h9v3h-9z" /><circle cx="11.500" cy="11.500" r="4.500" fill="#f4f4f4" stroke="#333" /><path d="M9 11.500h5M11.500 9v5" stroke="#333" /></svg>
            </IconButton>
            <span className="flex-1" />
            <label htmlFor="machine" className="w-[67px] font-bold">Machine</label>
            <div className="relative h-[21px] w-[128px]">
              <select id="machine" className="block h-full w-full appearance-none border border-[#222] bg-white pl-[3px] text-[11px] text-[#222]">
                <option>Desktop</option>
                <option>Desktop 12x24</option>
                <option>Large</option>
              </select>
              <span className="pointer-events-none absolute inset-y-0 right-0 flex w-[14px] items-center justify-center bg-[#333]"><Caret color="#fff" /></span>
              <MachineMenu />
            </div>
            <span className="mr-[2px] ml-[7px]"><IconButton label="Edit machine"><EditIcon /></IconButton></span>
          </div>
          <ToolDetails />
          <div className="mt-[17px] flex justify-end gap-[14px] pr-[11px]">
            <PushButton>OK</PushButton>
            <PushButton>Cancel</PushButton>
          </div>
        </div>
      </div>
    </div>
  );
}

export default function App() {
  return (
    <div className={`relative flex h-screen w-full flex-col overflow-hidden bg-[#eee] ${UI}`}>
      <TitleBar />
      <MenuBar />
      <div className="flex min-h-0 flex-1">
        <SideTabs />
        <Workspace />
        <ToolpathsPanel />
      </div>
      <footer className="flex h-5 shrink-0 items-center justify-between pr-[15px] pl-1 text-[11px] text-[#222]">
        <span>Ready</span>
        <span>X(13.7693) Y(7.7279)</span>
      </footer>
      <ToolDatabase />
    </div>
  );
}
